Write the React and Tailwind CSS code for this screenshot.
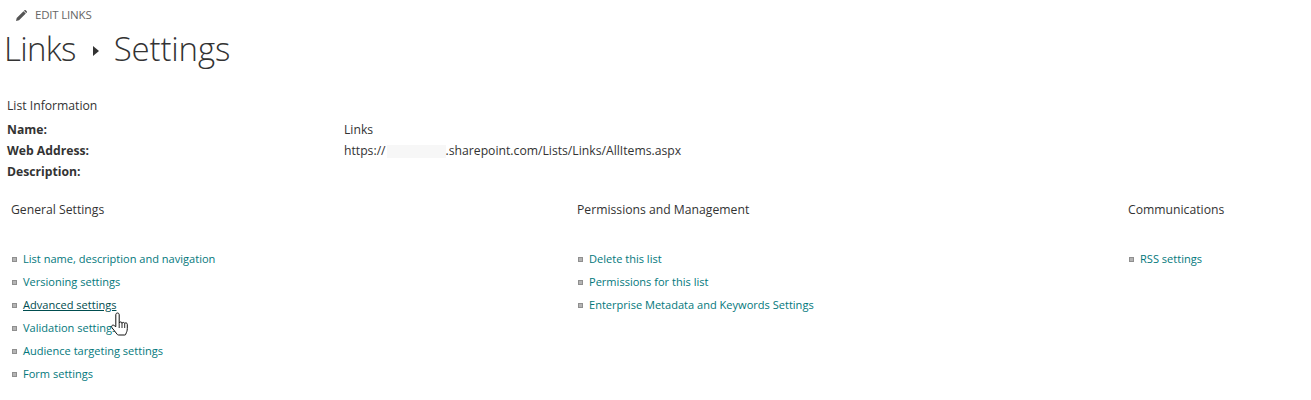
const F = { fontFamily: '"Open Sans", "Noto Sans", sans-serif' };

function Bullet() {
  return <span className="w-[5px] h-[5px] bg-[#b4b4b4] border border-[#8f8f8f] shrink-0" />;
}

function Item({ text, hover }) {
  return (
    <div className="h-[23px] flex items-center gap-[6px] pl-[1px] relative text-[11.05px]">
      <Bullet />
      <a className={hover ? "text-[#004d4f] underline decoration-[#004d4f]" : "text-[#03787c]"}>{text}</a>
      {hover && (
        <svg className="absolute left-[100px] top-[18px] z-10" width="20" height="24" viewBox="0 0 20 24">
          <path
            d="M6.500 1c1 0 1.700.7 1.700 1.800v8.500c0-1.700 2.800-1.900 2.800 0v.2c0-1.500 2.700-1.500 2.700.2 0-1.200 2.600-1.200 2.600.6v4.200c0 2.500-.8 3.700-1.500 5.500-.2.7-.3 1-1 1H7.500c-.7 0-1-.2-1.400-.8l-5-6.300c-1.500-2 .7-3.700 2.300-2.200l1.400 1V2.800C4.800 1.700 5.500 1 6.500 1Z"
            fill="#fff"
            stroke="#111"
            strokeWidth="1"
            strokeLinejoin="round"
          />
          <path d="M8.200 11.500v4.500M11 11.500v4.500M13.700 12v4" stroke="#111" strokeWidth="0.9" fill="none" />
        </svg>
      )}
    </div>
  );
}

function Section({ title, items, className, hoverIndex }) {
  return (
    <div className={className}>
      <div className="text-[12.2px] leading-[18px] text-[#333] h-[45px]">{title}</div>
      <div className="pt-[2px]">
        {items.map((t, i) => (
          <Item key={t} text={t} hover={i === hoverIndex} />
        ))}
      </div>
    </div>
  );
}

function Info({ label, children }) {
  return (
    <div className="flex h-[21px] items-center">
      <div className="w-[337px] font-bold text-[#333]">{label}</div>
      <div className="text-[#333] flex items-center">{children}</div>
    </div>
  );
}

export default function App() {
  return (
    <div style={F} className="bg-white w-[1311px] h-[400px] overflow-hidden text-[12.2px] relative">
      <div className="flex items-center h-[20px] mt-[5px] pl-[16px] gap-[8px] text-[11.5px] text-[#666]">
        <svg width="11" height="11" viewBox="0 0 11 11">
          <path d="M0 11l.7-3L7.500 1.200l2.300 2.300L3 10.300 0 11Z M8.300.4c.5-.5 1.100-.5 1.600 0l.7.700c.5.500.5 1.100 0 1.600l-.4.400L7.900.8Z" fill="#555" />
        </svg>
        <span className="tracking-[-0.2px]">EDIT LINKS</span>
      </div>
      <div className="flex items-center h-[50px] -mt-[2px] pl-[4px] text-[33px] font-light text-[#333] leading-none">
        <span className="tracking-[-0.7px]">Links</span>
        <svg className="ml-[17px] mr-[15px] mt-[5px]" width="6" height="10" viewBox="0 0 6 10"><path d="M0 0l6 5-6 5Z" fill="#333" /></svg>
        <span className="tracking-[-0.15px]">Settings</span>
      </div>
      <div className="pl-[7px] mt-[24px] text-[12.2px] leading-[18px] text-[#333]">List Information</div>
      <div className="pl-[7px] mt-[5px]">
        <Info label="Name:">Links</Info>
        <Info label="Web Address:">
          https://
          <span className="w-[59px] h-[13px] ml-[1px] bg-[#f7f7f7]" />
          .sharepoint.com/Lists/Links/AllItems.aspx
        </Info>
        <Info label="Description:" />
      </div>
      <div className="flex mt-[18px] pl-[11px]">
        <Section
          className="w-[566px]"
          title="General Settings"
          hoverIndex={2}
          items={["List name, description and navigation", "Versioning settings", "Advanced settings", "Validation settings", "Audience targeting settings", "Form settings"]}
        />
        <Section
          className="w-[551px]"
          title="Permissions and Management"
          items={["Delete this list", "Permissions for this list", "Enterprise Metadata and Keywords Settings"]}
        />
        <Section title="Communications" items={["RSS settings"]} />
      </div>
    </div>
  );
}
